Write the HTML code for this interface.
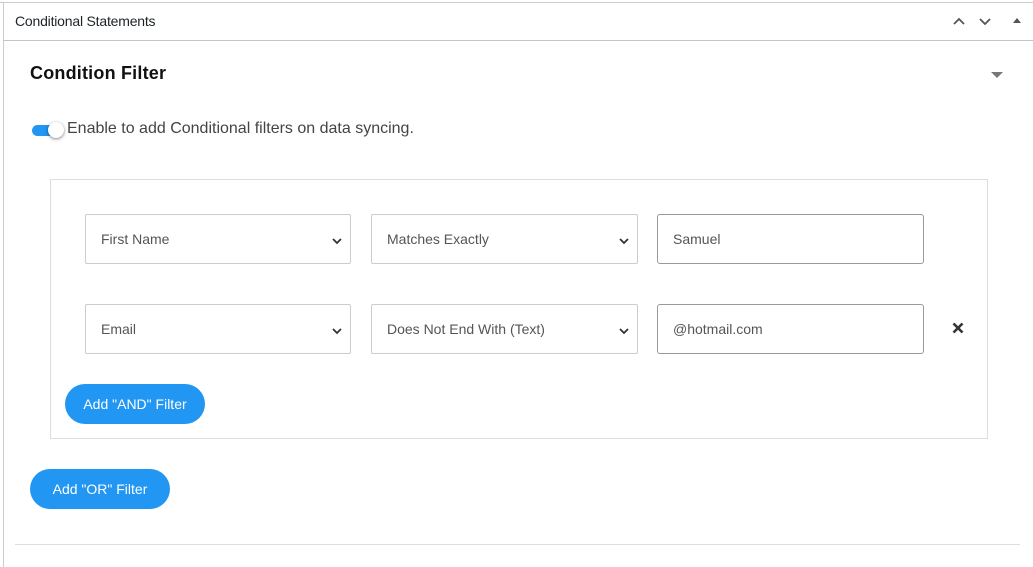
<!DOCTYPE html><html><head><style>
body{margin:0;width:1033px;height:567px;background:#fff;position:relative;overflow:hidden;font-family:"Liberation Sans",sans-serif;color:#333}
.a{position:absolute}
.sel{position:absolute;border:1px solid #ccc;border-radius:2px;background:#fff;font-size:14px;color:#555;box-sizing:border-box;height:50px;line-height:48px;padding-left:15px}
.inp{border-color:#999;border-radius:3px}
.btn{position:absolute;background:#2196f3;color:#fff;font-size:14px;border-radius:20px;text-align:center;height:40px;line-height:40px}
</style></head><body>
<div class="a" style="left:0;top:2px;width:1033px;height:1px;background:#ccc"></div>
<div class="a" style="left:3px;top:2px;width:1px;height:565px;background:#ccc"></div>
<div class="a" style="left:3px;top:40px;width:1030px;height:1px;background:#c3c4c7"></div>
<div class="a" style="left:15px;top:13px;font-size:14px;color:#1d2327;letter-spacing:-0.2px">Conditional Statements</div>
<svg class="a" style="left:952px;top:14px" width="75" height="14"><path d="M2 10 L7 5 L12 10" stroke="#555" stroke-width="1.8" fill="none"/><path d="M28 5 L33 10 L38 5" stroke="#555" stroke-width="1.8" fill="none"/><path d="M61 9 L65 4 L69 9Z" fill="#555"/></svg>
<div class="a" style="left:30px;top:63px;font-size:18px;font-weight:bold;color:#111;letter-spacing:0.2px">Condition Filter</div>
<svg class="a" style="left:990px;top:71px" width="14" height="8"><path d="M1 1 L13 1 L7 7Z" fill="#777"/></svg>
<div class="a" style="left:32px;top:125px;width:28px;height:11px;border-radius:6px;background:#2196f3"></div>
<div class="a" style="left:48px;top:122px;width:16px;height:16px;border-radius:50%;background:#fff;box-shadow:0 1px 3px rgba(0,0,0,.5)"></div>
<div class="a" style="left:67px;top:120px;font-size:16px;color:#444">Enable to add Conditional filters on data syncing.</div>
<div class="a" style="left:50px;top:179px;width:938px;height:260px;border:1px solid #ddd;box-sizing:border-box"></div>
<div class="sel" style="left:85px;top:214px;width:266px">First Name</div>
<div class="sel" style="left:371px;top:214px;width:267px">Matches Exactly</div>
<div class="sel inp" style="left:657px;top:214px;width:267px">Samuel</div>
<div class="sel" style="left:85px;top:304px;width:266px">Email</div>
<div class="sel" style="left:371px;top:304px;width:267px">Does Not End With (Text)</div>
<div class="sel inp" style="left:657px;top:304px;width:267px">@hotmail.com</div>
<svg class="a" style="left:330px;top:236px" width="300" height="100"><g stroke="#333" stroke-width="1.8" fill="none"><path d="M3 3 L7 7 L11 3"/><path d="M290 3 L294 7 L298 3"/><path d="M3 93 L7 97 L11 93"/><path d="M290 93 L294 97 L298 93"/></g></svg>
<svg class="a" style="left:952px;top:322px" width="12" height="12"><path d="M1.5 1.5 L10.5 10.5 M10.5 1.5 L1.5 10.5" stroke="#333" stroke-width="2.6"/></svg>
<div class="btn" style="left:65px;top:384px;width:140px">Add "AND" Filter</div>
<div class="btn" style="left:30px;top:469px;width:140px">Add "OR" Filter</div>
<div class="a" style="left:15px;top:544px;width:1005px;height:1px;background:#ddd"></div>
</body></html>
